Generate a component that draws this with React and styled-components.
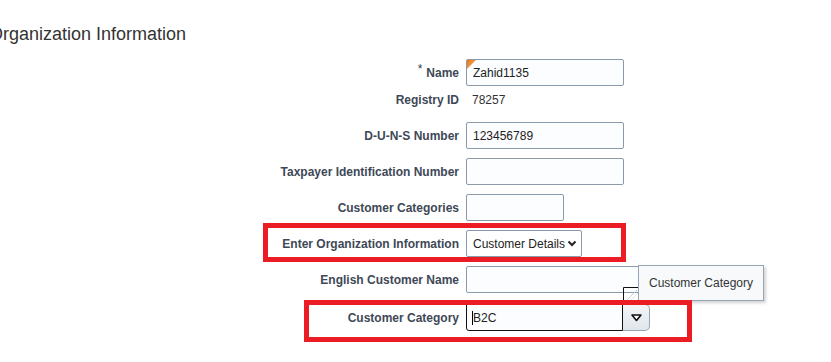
import React from 'react'
import styled, { createGlobalStyle } from 'styled-components'

const GlobalStyle = createGlobalStyle`
  html, body {
    height: 100%;
  }
  body {
    margin: 0;
    background: #fff;
    font-family: "Liberation Sans", Arial, sans-serif;
  }
`

const Page = styled.div`
  padding: 24px 0 30px;
  min-height: 100%;
  box-sizing: border-box;
  overflow: hidden;
`

const Title = styled.h2`
  margin: 0 0 14px -11px;
  font-size: 18px;
  line-height: 21px;
  font-weight: normal;
  color: #333;
`

const Form = styled.div`
  display: flex;
  flex-direction: column;
  gap: 9px;
`

const Row = styled.div`
  position: relative;
  display: flex;
  align-items: center;
  gap: 7px;
  height: ${(p) => p.$h || 27}px;
  margin-top: ${(p) => p.$mt || 0}px;

  ${(p) => p.$lift && `& > * { margin-top: -${p.$lift * 2}px; }`}

  ${(p) =>
    p.$box &&
    `
    &::after {
      content: '';
      position: absolute;
      z-index: 3;
      left: ${p.$box.left}px;
      top: ${p.$box.top}px;
      width: ${p.$box.width}px;
      height: ${p.$box.height}px;
      box-sizing: border-box;
      border: 5px solid #ec1c24;
      pointer-events: none;
    }
  `}
`

const Label = styled.div`
  width: 459px;
  flex: none;
  text-align: right;
  font-size: 12px;
  font-weight: bold;
  color: #3e4856;
`

const Star = styled.span`
  font-weight: normal;
  font-size: 12px;
  position: relative;
  top: -4px;
  margin-right: 4px;
  color: #2d3b4e;
`

const Value = styled.div`
  padding-left: 6px;
  font-size: 12px;
  color: #333;
`

const Field = styled.div`
  position: relative;
  display: flex;
  align-items: stretch;
  height: 27px;
`

const Input = styled.input`
  box-sizing: border-box;
  height: 27px;
  width: ${(p) => p.$w}px;
  margin: 0;
  padding: 0 6px;
  border: 1px solid #8b9aa8;
  border-radius: 2px;
  background: #fcfdff;
  font-family: "Liberation Sans", Arial, sans-serif;
  font-size: 12px;
  color: #222;
  outline: none;
`

const Required = styled.svg`
  position: absolute;
  left: 1px;
  top: 1px;
  width: 9px;
  height: 9px;
`

const SelectBox = styled.div`
  box-sizing: border-box;
  display: flex;
  align-items: center;
  justify-content: space-between;
  width: 116px;
  height: 27px;
  padding: 0 4px 0 6px;
  border: 1px solid #8b9aa8;
  border-radius: 2px;
  background: #fff;
  font-size: 12px;
  color: #222;
`

const ComboInput = styled.div`
  box-sizing: border-box;
  display: flex;
  align-items: center;
  width: 157px;
  height: 27px;
  padding-left: 5px;
  border: 1px solid #111;
  border-radius: 0 0 0 3px;
  background: #fcfdff;
  font-size: 12px;
  color: #222;
`

const Caret = styled.span`
  width: 1px;
  height: 14px;
  background: #000;
`

const ComboButton = styled.div`
  box-sizing: border-box;
  display: flex;
  align-items: center;
  justify-content: center;
  width: 27px;
  height: 27px;
  border: 1px solid #98a6b3;
  border-left: none;
  border-radius: 0 5px 5px 0;
  background: linear-gradient(#f3f5f7, #e1e6eb);
`

const Tooltip = styled.div`
  position: absolute;
  z-index: 2;
  left: 638px;
  top: -1px;
  box-sizing: border-box;
  width: 126px;
  height: 36px;
  padding-left: 10px;
  line-height: 34px;
  border: 1px solid #97a6b5;
  background: #f7f9fb;
  box-shadow: 2px 2px 3px rgba(0, 0, 0, 0.18);
  font-size: 12px;
  color: #333;
`

const Anchor = styled.svg`
  position: absolute;
  z-index: 2;
  left: 623px;
  top: 21px;
  width: 16px;
  height: 17px;
`

const App = () => {
  return (
    <Page>
      <GlobalStyle />
      <Title>Organization Information</Title>
      <Form>
        <Row>
          <Label>
            <Star>*</Star>Name
          </Label>
          <Field>
            <Input $w={158} readOnly value="Zahid1135" />
            <Required viewBox="0 0 9 9">
              <defs>
                <linearGradient id="req" x1="0" y1="0" x2="1" y2="1">
                  <stop offset="0" stopColor="#ef7410" />
                  <stop offset="0.45" stopColor="#f1923f" />
                  <stop offset="1" stopColor="#fbe3cc" />
                </linearGradient>
              </defs>
              <polygon points="0,0 9,0 0,9" fill="url(#req)" />
            </Required>
          </Field>
        </Row>
        <Row $h={18} $lift={4}>
          <Label>Registry ID</Label>
          <Value>78257</Value>
        </Row>
        <Row>
          <Label>D-U-N-S Number</Label>
          <Input $w={158} readOnly value="123456789" />
        </Row>
        <Row>
          <Label>Taxpayer Identification Number</Label>
          <Input $w={158} readOnly value="" />
        </Row>
        <Row>
          <Label>Customer Categories</Label>
          <Input $w={98} readOnly value="" />
        </Row>
        <Row $box={{ left: 263, top: -7, width: 363, height: 39 }}>
          <Label>Enter Organization Information</Label>
          <SelectBox>
            Customer Details
            <svg width="10" height="7" viewBox="0 0 10 7">
              <polyline points="1.5,1.5 5,5 8.5,1.5" fill="none" stroke="#222" strokeWidth="2" />
            </svg>
          </SelectBox>
        </Row>
        <Row>
          <Label>English Customer Name</Label>
          <Input $w={174} readOnly value="" />
          <Anchor viewBox="0 0 16 17">
            <path d="M0.5 17 V0.5 H16" fill="none" stroke="#111" strokeWidth="1" />
            <path d="M14 3 L3 14" fill="none" stroke="#c9cfd5" strokeWidth="1" />
            <path d="M15 6 L6 15" fill="none" stroke="#e1e5e9" strokeWidth="1" />
          </Anchor>
          <Tooltip>Customer Category</Tooltip>
        </Row>
        <Row $mt={2} $box={{ left: 304, top: -4, width: 388, height: 42 }}>
          <Label>Customer Category</Label>
          <Field>
            <ComboInput>
              <Caret />
              B2C
            </ComboInput>
            <ComboButton>
              <svg width="11" height="8" viewBox="0 0 11 8">
                <polygon points="1,1 10,1 5.5,6.5" fill="#fff" stroke="#111" strokeWidth="1.6" strokeLinejoin="round" />
              </svg>
            </ComboButton>
          </Field>
        </Row>
      </Form>
    </Page>
  )
}

export default App
